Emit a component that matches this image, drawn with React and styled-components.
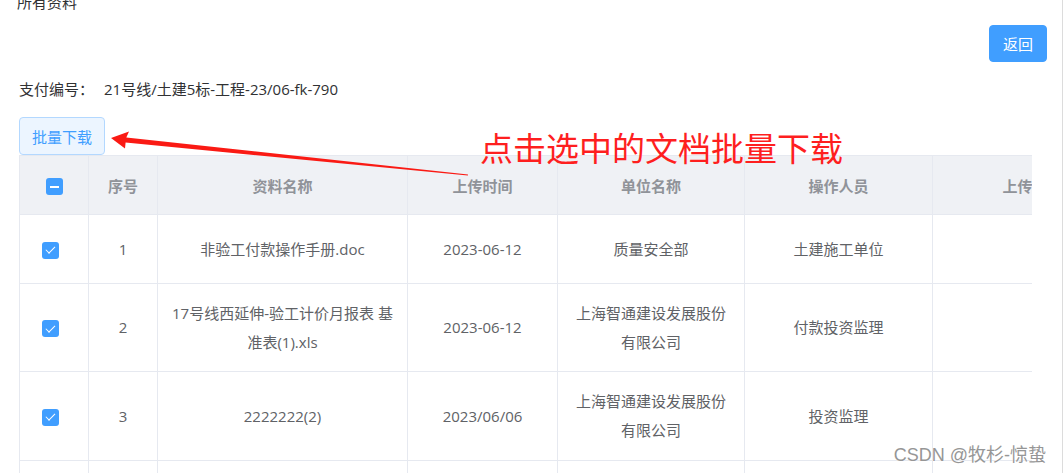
import React from "react";
import styled, { createGlobalStyle, css } from "styled-components";

const Global = createGlobalStyle`
  html, body { margin: 0; padding: 0; background: #fff; }
  body { font-family: "Open Sans", "Noto Sans CJK SC", sans-serif; }
`;

const Page = styled.div`
  position: relative;
  width: 1063px;
  height: 473px;
  overflow: hidden;
  box-sizing: border-box;
  padding: 0 15px 0 19px;
  border-right: 1px solid #dcdcdc;
  color: #303133;
`;

const Title = styled.div`
  margin: -9px 0 0 -2px;
  font-size: 15px;
  line-height: 22px;
  color: #303133;
`;

const Toolbar = styled.div`
  display: flex;
  justify-content: flex-end;
  margin-top: 12px;
`;

const Button = styled.button`
  box-sizing: border-box;
  height: ${(p) => p.$h}px;
  padding: 0 ${(p) => p.$px}px;
  border-radius: 4px;
  font-family: inherit;
  font-size: 15px;
  cursor: pointer;
  ${(p) =>
    p.$variant === "primary"
      ? css`
          background: #409eff;
          border: 1px solid #409eff;
          color: #fff;
        `
      : css`
          background: #ecf5ff;
          border: 1px solid #b3d8ff;
          color: #409eff;
        `}
`;

const Info = styled.div`
  display: flex;
  gap: 10px;
  margin-top: 16px;
  font-size: 15px;
  line-height: 22px;
  color: #303133;
`;

const Actions = styled.div`
  margin-top: 17px;
`;

const TableWrap = styled.div`
  width: 1013px;
  overflow: hidden;
`;

const Table = styled.table`
  width: 1113px;
  table-layout: fixed;
  border-collapse: collapse;
  font-size: 15px;
`;

const Th = styled.th`
  height: 58px;
  padding: 0 10px;
  background: #eff1f5;
  border: 1px solid #e6e9f0;
  color: #909399;
  font-weight: 700;
  text-align: center;
  white-space: nowrap;
  overflow: hidden;
`;

const Td = styled.td`
  height: ${(p) => p.$h}px;
  padding: 0 10px;
  border: 1px solid #e6e9f0;
  color: #606266;
  text-align: center;
  line-height: 29px;
  vertical-align: middle;
`;

const Check = styled.span`
  display: inline-block;
  position: relative;
  width: 17px;
  height: 17px;
  margin-right: ${(p) => (p.$indeterminate ? 0 : 7)}px;
  border-radius: 3px;
  background: #409eff;
  vertical-align: middle;
  &::after {
    content: "";
    position: absolute;
    ${(p) =>
      p.$indeterminate
        ? css`
            left: 4px;
            right: 4px;
            top: 7.5px;
            height: 2px;
            background: #fff;
          `
        : css`
            left: 6px;
            top: 2.5px;
            width: 3.5px;
            height: 8px;
            border: solid #fff;
            border-width: 0 1.5px 1.5px 0;
            transform: rotate(45deg);
          `}
  }
`;

const Annotation = styled.div`
  position: absolute;
  left: 480px;
  top: 131px;
  font-family: "Noto Sans CJK SC", sans-serif;
  font-size: 33px;
  line-height: 1;
  color: #fe1f1f;
  white-space: nowrap;
  pointer-events: none;
`;

const ArrowLayer = styled.svg`
  position: absolute;
  left: 0;
  top: 0;
  pointer-events: none;
`;

const Watermark = styled.div`
  position: absolute;
  right: 16px;
  top: 445px;
  font-family: "Liberation Sans", "Noto Sans CJK SC", sans-serif;
  font-size: 18px;
  line-height: 20px;
  color: #969696;
  text-shadow: 0 0 1px #fff, 0 0 1px #fff;
  white-space: nowrap;
`;

const columns = [
  { w: 69, title: null },
  { w: 69, title: "序号" },
  { w: 250, title: "资料名称" },
  { w: 150, title: "上传时间" },
  { w: 187, title: "单位名称" },
  { w: 188, title: "操作人员" },
  { w: 200, title: "上传单位" },
];

const rows = [
  {
    h: 68,
    no: 1,
    name: ["非验工付款操作手册.doc"],
    date: "2023-06-12",
    unit: ["质量安全部"],
    op: "土建施工单位",
  },
  {
    h: 87,
    no: 2,
    name: ["17号线西延伸-验工计价月报表 基", "准表(1).xls"],
    date: "2023-06-12",
    unit: ["上海智通建设发展股份", "有限公司"],
    op: "付款投资监理",
  },
  {
    h: 88,
    no: 3,
    name: ["2222222(2)"],
    date: "2023/06/06",
    unit: ["上海智通建设发展股份", "有限公司"],
    op: "投资监理",
  },
];

const Lines = ({ lines }) =>
  lines.map((l, i) => (
    <React.Fragment key={i}>
      {i > 0 && <br />}
      {l}
    </React.Fragment>
  ));

export default function App() {
  return (
    <>
      <Global />
      <Page>
        <Title>所有资料</Title>
        <Toolbar>
          <Button $variant="primary" $h={37} $px={13}>
            返回
          </Button>
        </Toolbar>
        <Info>
          <span>支付编号：</span>
          <span>21号线/土建5标-工程-23/06-fk-790</span>
        </Info>
        <Actions>
          <Button $h={38} $px={12}>
            批量下载
          </Button>
        </Actions>
        <TableWrap>
          <Table>
            <colgroup>
              {columns.map((c, i) => (
                <col key={i} style={{ width: c.w }} />
              ))}
            </colgroup>
            <thead>
              <tr>
                {columns.map((c, i) => (
                  <Th key={i}>{c.title === null ? <Check $indeterminate /> : c.title}</Th>
                ))}
              </tr>
            </thead>
            <tbody>
              {rows.map((r) => (
                <tr key={r.no}>
                  <Td $h={r.h}>
                    <Check />
                  </Td>
                  <Td $h={r.h}>{r.no}</Td>
                  <Td $h={r.h}>
                    <Lines lines={r.name} />
                  </Td>
                  <Td $h={r.h}>{r.date}</Td>
                  <Td $h={r.h}>
                    <Lines lines={r.unit} />
                  </Td>
                  <Td $h={r.h}>{r.op}</Td>
                  <Td $h={r.h}></Td>
                </tr>
              ))}
              <tr>
                {columns.map((c, i) => (
                  <Td key={i} $h={68}></Td>
                ))}
              </tr>
            </tbody>
          </Table>
        </TableWrap>

        <ArrowLayer width="1063" height="473" viewBox="0 0 1063 473">
          <polygon
            fill="#fa1a14"
            points="111,138 129,131.5 126.3,137.4 468,174.4 467.9,175.6 125.6,142.6 125,148.5"
          />
        </ArrowLayer>
        <Annotation>点击选中的文档批量下载</Annotation>
        <Watermark>CSDN @牧杉-惊蛰</Watermark>
      </Page>
    </>
  );
}
